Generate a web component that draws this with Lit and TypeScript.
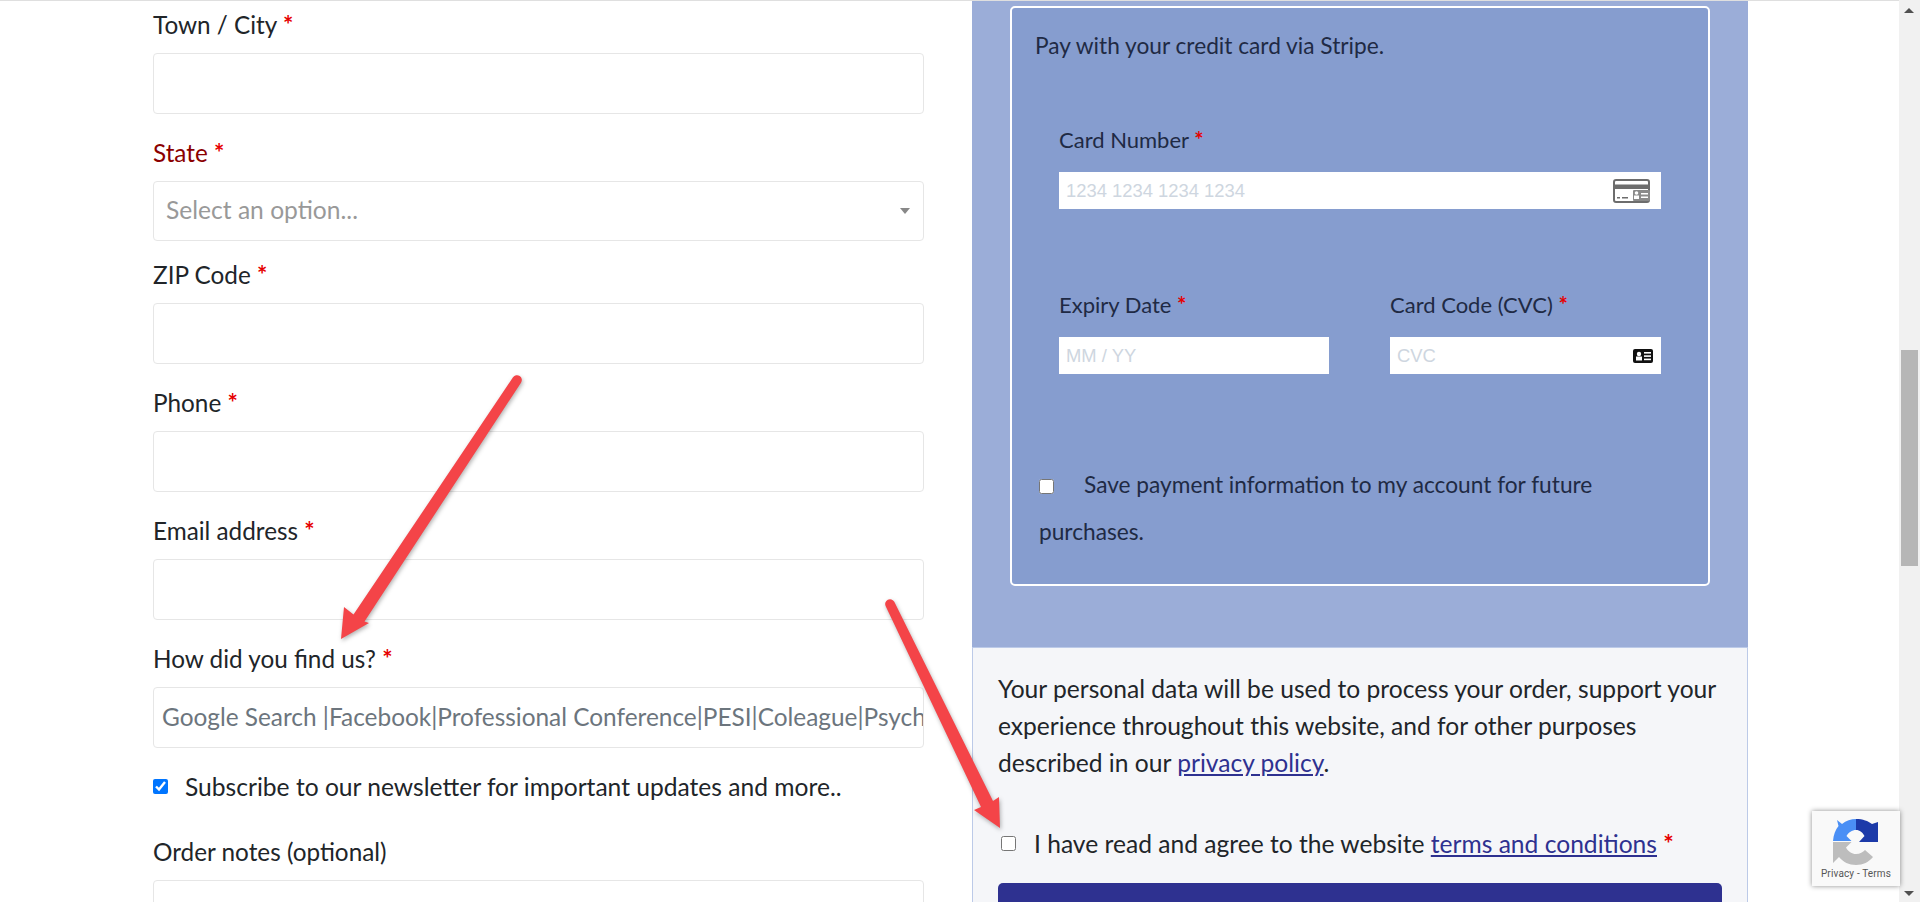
import { LitElement, html, css, svg } from "lit";
import { customElement } from "lit/decorators.js";

const req = html`<abbr class="req">*</abbr>`;

@customElement("app-root")
export class AppRoot extends LitElement {
  static styles = css`
    :host { display: block; width: 1920px; height: 902px; overflow: hidden; position: relative; background: #fff;
      font-family: "Lato", "Noto Sans", sans-serif; font-size: 24.6px; color: #212529; }
    * { box-sizing: border-box; }
    .page { display: flex; height: 902px; overflow: hidden; }
    .main { flex: 1; display: flex; min-width: 0; border-top: 1px solid #dfdfdf; height: 902px; overflow: hidden; }
    .left { width: 924px; padding: 6.5px 0 0 153px; flex: none; }
    .field { margin-bottom: 21.5px; }
    .field.tight { margin-bottom: 16.5px; }
    .lab { display: block; line-height: 34px; height: 34px; margin-bottom: 11.5px; white-space: nowrap; font-size: 24.3px; }
    .lab.err { color: #8b0000; }
    .req { color: #e60000; font-weight: 700; text-decoration: none; }
    .ctl { display: flex; align-items: center; height: 61px; border: 1px solid #e6e6e6; border-radius: 4px; background: #fff;
      overflow: hidden; white-space: nowrap; padding: 0 8px 3px; color: #6c757d; font-size: 24.4px; }
    .ctl.sel { height: 60px; padding: 0 13px 4px 12px; color: #999; justify-content: space-between; font-size: 24.6px; }
    .caret { width: 0; height: 0; border: 5px solid transparent; border-top: 6px solid #888; border-bottom: 0; margin-top: 4px; }
    .sub { display: flex; align-items: center; height: 34px; margin-bottom: 31px; white-space: nowrap; }
    input[type="checkbox"] { margin: 0; width: 15px; height: 15px; flex: none; }
    .sub input { margin-right: 17px; }
    .ta { height: 120px; align-items: flex-start; padding: 17px 12px; }
    .right { width: 776px; margin-left: 48px; flex: none; display: flex; flex-direction: column; }
    .pay { background: #9badd8; padding: 5px 38px 0; height: 646px; flex: none; }
    .box { height: 580px; border: 2px solid #fff; border-radius: 5px; background: #869dcf; padding: 21px 23px; color: #1f2a44; font-size: 22.7px; }
    .line { line-height: 34px; height: 34px; white-space: nowrap; }
    .stripe { padding-left: 24px; width: 626px; }
    .s-lab { display: block; line-height: 34px; height: 34px; margin-bottom: 15px; white-space: nowrap; font-size: 22px; }
    .cn { margin-top: 60px; }
    .s-in { display: flex; align-items: center; justify-content: space-between; height: 37px; background: #fff; padding: 0 8px 0 7px;
      font-family: "Liberation Sans", Arial, sans-serif; font-size: 18.4px; color: #ced6e0; }
    .card-ic { flex: none; margin-right: 2px; }
    .cvc-ic { flex: none; }
    .two { display: grid; grid-template-columns: 270px 271px; justify-content: space-between; margin-top: 79px; }
    .save { margin: 87px 0 0 4px; line-height: 47px; white-space: nowrap; }
    .save input { vertical-align: -1px; margin-right: 30px; }
    .legal { flex: 1; background: #f5f6f9; border: 1px solid #bccae8; border-bottom: 0; padding: 22px 25px 0; }
    .legal p { margin: 0; line-height: 37px; white-space: nowrap; color: #212529; }
    a { color: #2e3190; text-decoration: underline; }
    .agree { display: flex; align-items: center; height: 37px; margin-top: 44px; padding-left: 3px; white-space: nowrap; }
    .agree input { margin-right: 18px; }
    .agree span { white-space: pre; }
    .btn { height: 60px; margin-top: 21px; background: #2e3190; border-radius: 5px 5px 0 0; }
    .bar { width: 21px; flex: none; background: #f1f1f1; position: relative; }
    .thumb { position: absolute; left: 2px; top: 350px; width: 17px; height: 216px; background: #b6b6b6; }
    .up, .down { position: absolute; left: 5px; width: 0; height: 0; border: 5px solid transparent; }
    .up { top: 8px; border-bottom: 5px solid #505050; border-top: 0; }
    .down { bottom: 6px; border-top: 5px solid #505050; border-bottom: 0; }
    .arrows { position: absolute; left: 0; top: 0; pointer-events: none; filter: drop-shadow(1px 2px 2px rgba(0,0,0,.3)); }
    .rc { position: absolute; left: 1812px; top: 811px; width: 88px; height: 75px; background: #f9f9f9; box-shadow: 0 0 5px rgba(0,0,0,.45);
      display: flex; flex-direction: column; align-items: center; }
    .rc svg { margin-top: 8px; }
    .rc div { font-family: "Roboto", sans-serif; font-size: 10px; color: #555; line-height: 14px; margin-top: 2px; white-space: nowrap; letter-spacing: .15px; }
  `;

  render() {
    return html`
      <div class="page">
        <div class="main">
          <section class="left">
            <div class="field"><label class="lab">Town / City ${req}</label><div class="ctl"></div></div>
            <div class="field tight"><label class="lab err">State ${req}</label>
              <div class="ctl sel"><span>Select an option...</span><i class="caret"></i></div></div>
            <div class="field"><label class="lab">ZIP Code ${req}</label><div class="ctl"></div></div>
            <div class="field"><label class="lab">Phone ${req}</label><div class="ctl"></div></div>
            <div class="field"><label class="lab">Email address ${req}</label><div class="ctl"></div></div>
            <div class="field"><label class="lab">How did you find us? ${req}</label>
              <div class="ctl">Google Search |Facebook|Professional Conference|PESI|Coleague|Psychology Today</div></div>
            <div class="sub"><input type="checkbox" checked /><span>Subscribe to our newsletter for important updates and more..</span></div>
            <div class="field"><label class="lab">Order notes (optional)</label>
              <div class="ctl ta">Notes about your order, e.g. special notes for delivery.</div></div>
          </section>
          <section class="right">
            <div class="pay">
              <div class="box">
                <div class="line">Pay with your credit card via Stripe.</div>
                <div class="stripe">
                  <div class="cn"><label class="s-lab">Card Number ${req}</label>
                    <div class="s-in"><span>1234 1234 1234 1234</span>${this.cardIcon()}</div></div>
                  <div class="two">
                    <div><label class="s-lab">Expiry Date ${req}</label><div class="s-in"><span>MM / YY</span></div></div>
                    <div><label class="s-lab">Card Code (CVC) ${req}</label><div class="s-in"><span>CVC</span>${this.cvcIcon()}</div></div>
                  </div>
                </div>
                <div class="save"><input type="checkbox" />Save payment information to my account for future<br />purchases.</div>
              </div>
            </div>
            <div class="legal">
              <p>Your personal data will be used to process your order, support your<br />experience throughout this website, and for other purposes<br />described in our <a href="#">privacy policy</a>.</p>
              <div class="agree"><input type="checkbox" /><span>I have read and agree to the website <a href="#">terms and conditions</a> ${req}</span></div>
              <div class="btn"></div>
            </div>
          </section>
        </div>
        <div class="bar"><i class="up"></i><div class="thumb"></div><i class="down"></i></div>
      </div>
      ${this.arrows()}
      <div class="rc">
        <svg width="46" height="46" viewBox="0 0 46 46">
          <path fill="#4a8ff5" d="M4 1 L9 5 C13 1.500 18 0 23 0 V11 C19 11 15.500 13.500 13.500 17 L18.500 22 H0 C0.500 15.500 2.500 10.500 5.500 7 Z"/>
          <path fill="#1c3aa9" d="M23 0 C30 0 35 2 39 5 L45 3 V23 H26 L31.500 17 C29.500 13.500 27 11 23 11 Z"/>
          <path fill="#bdbdbd" d="M0 23 H18.500 L13 28.500 C15 32.500 19 35 23 35 C27 35 30 33 32 31 L40 38 C36 43 30 46 23 46 C16 46 10 43 6 38 L0 44 Z"/>
        </svg>
        <div>Privacy - Terms</div>
      </div>
    `;
  }

  cardIcon() {
    return svg`<svg class="card-ic" width="38" height="24" viewBox="0 0 38 24">
      <rect x="1" y="1" width="35" height="22" rx="2" fill="#fff" stroke="#6d6d6d" stroke-width="2"/>
      <rect x="1" y="5.500" width="35" height="4.500" fill="#6d6d6d"/>
      <rect x="4" y="18" width="3" height="1.500" fill="#6d6d6d"/><rect x="9" y="18" width="6" height="1.500" fill="#6d6d6d"/>
      <rect x="20" y="11" width="17" height="11" rx="1" fill="#8a8a8a"/>
      <circle cx="23.500" cy="14" r="1.800" fill="#fff"/><rect x="21" y="16.500" width="5" height="3.500" fill="#fff"/>
      <rect x="28" y="14" width="7" height="1.500" fill="#fff"/><rect x="28" y="17.500" width="7" height="1.500" fill="#fff"/>
    </svg>`;
  }

  cvcIcon() {
    return svg`<svg class="cvc-ic" width="20" height="14" viewBox="0 0 20 14">
      <rect width="20" height="14" rx="2" fill="#111"/>
      <circle cx="6" cy="5" r="2.200" fill="#fff"/><rect x="3" y="7.500" width="6" height="4" fill="#fff"/>
      <rect x="11" y="3" width="7" height="1.600" fill="#fff"/><rect x="11" y="6.300" width="7" height="1.600" fill="#fff"/><rect x="11" y="9.600" width="7" height="1.600" fill="#fff"/>
    </svg>`;
  }

  arrows() {
    return svg`<svg class="arrows" width="1920" height="902" viewBox="0 0 1920 902">
      <path fill="#f44448" d="M513 377.300 A4.800 4.800 0 0 1 521 382.700 L364.500 621.500 L369 623 L341 639 L344 607 L353.500 614.500 Z"/>
      <path fill="#f44448" d="M885.700 606.200 A4.800 4.800 0 0 1 894.300 601.800 L993 801 L999 797 L1000 828 L974 810 L981 807 Z"/>
    </svg>`;
  }
}
